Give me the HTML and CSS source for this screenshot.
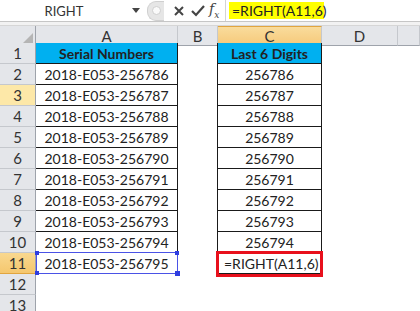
FILE: index.html
```html
<!DOCTYPE html>
<html lang="en">

<head>
  <meta charset="UTF-8">
  <title>RIGHT function</title>
  <link rel="stylesheet" href="styles.css">
</head>

<body>
  <div class="formula-bar">
    <div class="name-box">
      <span class="name">RIGHT</span>
      <svg class="drop" width="8" height="5" viewBox="0 0 8 5"><path d="M0 0h8L4 5z" fill="#444"/></svg>
    </div>
    <div class="grip"><span></span></div>
    <svg class="fbtn x" width="14" height="14" viewBox="0 0 14 14"><path d="M3 3l8 8M11 3l-8 8" stroke="#444" stroke-width="2"/></svg>
    <svg class="fbtn" width="16" height="14" viewBox="0 0 16 14"><path d="M2 7l4 4 8-9" stroke="#444" stroke-width="2.2" fill="none"/></svg>
    <div class="fx">f<sub>x</sub></div>
    <div class="formula"><span class="hl">=RIGHT(A11,6)<i class="caret"></i></span></div>
  </div>
  <div class="bar-gap"></div>

  <div class="sheet">
    <div class="row head">
      <div class="rh corner"><svg width="10" height="10" viewBox="0 0 10 10"><path d="M10 0v10H0z" fill="#b5b5b5"/></svg></div>
      <div class="ch">A</div>
      <div class="ch">B</div>
      <div class="ch active">C</div>
      <div class="ch">D</div>
      <div class="ch"></div>
    </div>
    <div class="row">
      <div class="rh">1</div>
      <div class="c t title">Serial Numbers</div>
      <div class="c tl"></div>
      <div class="c t title">Last 6 Digits</div>
      <div class="c"></div>
      <div class="c"></div>
    </div>
    <div class="row">
      <div class="rh">2</div>
      <div class="c t">2018-E053-256786</div>
      <div class="c tl"></div>
      <div class="c t">256786</div>
      <div class="c"></div>
      <div class="c"></div>
    </div>
    <div class="row">
      <div class="rh hover">3</div>
      <div class="c t">2018-E053-256787</div>
      <div class="c tl"></div>
      <div class="c t">256787</div>
      <div class="c"></div>
      <div class="c"></div>
    </div>
    <div class="row">
      <div class="rh">4</div>
      <div class="c t">2018-E053-256788</div>
      <div class="c tl"></div>
      <div class="c t">256788</div>
      <div class="c"></div>
      <div class="c"></div>
    </div>
    <div class="row">
      <div class="rh">5</div>
      <div class="c t">2018-E053-256789</div>
      <div class="c tl"></div>
      <div class="c t">256789</div>
      <div class="c"></div>
      <div class="c"></div>
    </div>
    <div class="row">
      <div class="rh">6</div>
      <div class="c t">2018-E053-256790</div>
      <div class="c tl"></div>
      <div class="c t">256790</div>
      <div class="c"></div>
      <div class="c"></div>
    </div>
    <div class="row">
      <div class="rh">7</div>
      <div class="c t">2018-E053-256791</div>
      <div class="c tl"></div>
      <div class="c t">256791</div>
      <div class="c"></div>
      <div class="c"></div>
    </div>
    <div class="row">
      <div class="rh">8</div>
      <div class="c t">2018-E053-256792</div>
      <div class="c tl"></div>
      <div class="c t">256792</div>
      <div class="c"></div>
      <div class="c"></div>
    </div>
    <div class="row">
      <div class="rh">9</div>
      <div class="c t">2018-E053-256793</div>
      <div class="c tl"></div>
      <div class="c t">256793</div>
      <div class="c"></div>
      <div class="c"></div>
    </div>
    <div class="row">
      <div class="rh">10</div>
      <div class="c t">2018-E053-256794</div>
      <div class="c tl"></div>
      <div class="c t">256794</div>
      <div class="c"></div>
      <div class="c"></div>
    </div>
    <div class="row">
      <div class="rh active">11</div>
      <div class="c t selected">
        2018-E053-256795
        <span class="sel"><i class="h tl-h"></i><i class="h tr-h"></i><i class="h bl-h"></i><i class="h br-h"></i></span>
      </div>
      <div class="c tl"></div>
      <div class="c t editing">
        =RIGHT(A11,6)
        <span class="mark"></span>
      </div>
      <div class="c"></div>
      <div class="c"></div>
    </div>
    <div class="row">
      <div class="rh">12</div>
      <div class="c"></div>
      <div class="c"></div>
      <div class="c"></div>
      <div class="c"></div>
      <div class="c"></div>
    </div>
    <div class="row">
      <div class="rh">13</div>
      <div class="c"></div>
      <div class="c"></div>
      <div class="c"></div>
      <div class="c"></div>
      <div class="c"></div>
    </div>
  </div>
</body>

</html>
```

FILE: styles.css
```css
body {
  margin: 0;
  width: 420px;
  height: 311px;
  overflow: hidden;
  background: #fff;
  font-family: Lato, "Liberation Sans", sans-serif;
  color: #222;
}

/* formula bar */
.formula-bar {
  display: flex;
  align-items: center;
  height: 21px;
  border-bottom: 1px solid #c6c6c6;
  background: #fff;
}

.name-box {
  display: flex;
  align-items: center;
  width: 143px;
  height: 100%;
  box-sizing: border-box;
  font-size: 13px;
  color: #333;
}

.name {
  flex: 1;
  text-align: center;
  padding-right: 4px;
}

.drop {
  margin-right: 3px;
}

.grip {
  display: flex;
  align-items: center;
  justify-content: center;
  width: 16px;
  height: 18px;
  margin-left: 4px;
  border-radius: 9px 0 0 9px;
  background: #e6e6e6;
  border: 1px solid #d0d0d0;
  border-right: none;
}

.grip span {
  width: 7px;
  height: 7px;
  border-radius: 50%;
  background: #fafafa;
  border: 1px solid #cfcfcf;
}

.fbtn {
  margin-left: 4px;
}

.fbtn.x {
  margin-left: 8px;
}

.fx {
  width: 16px;
  margin-left: 3px;
  font-family: "DejaVu Serif", "Liberation Serif", serif;
  font-style: italic;
  font-size: 14px;
  color: #444;
}

.fx sub {
  font-size: 9px;
}

.formula {
  flex: 1;
  height: 100%;
  display: flex;
  align-items: center;
  padding-left: 3px;
  border-left: 1px solid #d4d4d4;
}

.hl {
  display: flex;
  align-items: center;
  height: 17px;
  width: 92px;
  padding-left: 3px;
  background: #ffff00;
  font-size: 14px;
  color: #222;
}

.caret {
  display: inline-block;
  width: 1px;
  height: 15px;
  margin-left: 1px;
  background: #000;
}

.bar-gap {
  height: 3px;
  background: #f2f2f2;
  border-bottom: 1px solid #d6d6d6;
}

/* grid */
.row {
  display: grid;
  grid-template-columns: 36px 142px 40px 104px 76px 1fr;
  height: 21px;
  font-size: 14px;
}

.row > div {
  box-sizing: border-box;
  display: flex;
  align-items: center;
  justify-content: center;
  white-space: nowrap;
}

.row.head {
  height: 17px;
}

.rh {
  background: #e4e6ea;
  border-right: 1px solid #9ea3ab;
  border-bottom: 1px solid #c5c8cd;
  color: #333;
  font-size: 15px;
}

.corner {
  justify-content: flex-end !important;
  align-items: flex-end !important;
  padding: 0 2px 2px 0;
}

.ch {
  background: #e4e6ea;
  border-right: 1px solid #c5c8cd;
  border-bottom: 1px solid #9ea3ab;
  color: #333;
  font-size: 15px;
}

.ch.active {
  background: linear-gradient(#f9dc9c, #f6c97a);
  border-top: 1px solid #e1a53f;
}

.rh.hover {
  background: #fde8a8;
}

.rh.active {
  background: linear-gradient(#f9d88f, #f5c76e);
  border-bottom-color: #e1a53f;
}

.c.t {
  border-right: 1px solid #1a1a1a;
  border-bottom: 1px solid #1a1a1a;
}

.c.tl {
  border-right: 1px solid #1a1a1a;
}

.title {
  background: #00b0f0;
  font-weight: bold;
}

.selected,
.editing {
  position: relative;
}

.sel {
  position: absolute;
  left: 0;
  top: -1px;
  right: -1px;
  bottom: -1px;
  border: 1px solid #4a52e6;
}

.h {
  position: absolute;
  width: 4px;
  height: 4px;
  background: #2f3ee0;
}

.tl-h { left: -2px; top: -2px; }
.tr-h { right: -2px; top: -2px; }
.bl-h { left: -2px; bottom: -2px; }
.br-h { right: -3px; bottom: -3px; width: 5px; height: 5px; }

.editing {
  justify-content: flex-start !important;
  padding-left: 6px;
}

.mark {
  position: absolute;
  left: -2px;
  top: -2px;
  right: -2px;
  bottom: -4px;
  border: 3px solid #e8101c;
}
```
